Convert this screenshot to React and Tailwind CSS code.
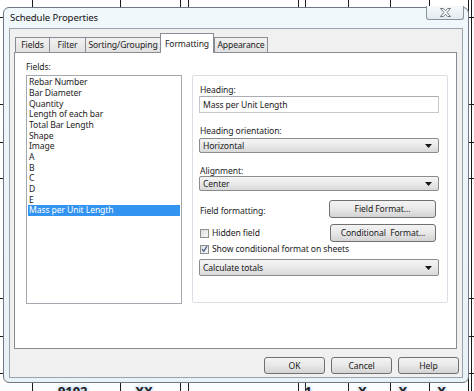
import React from "react";

function Combo({ label, className }) {
  return (
    <div
      className={`flex items-center justify-between rounded-[2px] border border-[#8b8c8e] bg-linear-to-b from-[#f5f5f5] via-[#e9e9e9] to-[#d9d9d9] pl-[3px] pr-[6px] ${className}`}
    >
      <span>{label}</span>
      <svg width="7" height="4" viewBox="0 0 7 4">
        <path d="M0 0H7L3.5 4Z" fill="#151515" />
      </svg>
    </div>
  );
}

function Btn({ children, className }) {
  return (
    <div
      className={`flex items-center justify-center rounded-[3px] border border-[#707070] bg-linear-to-b from-[#f3f3f3] via-[#e8e8e8] to-[#d3d3d3] ${className}`}
    >
      {children}
    </div>
  );
}

function Check({ checked }) {
  return (
    <div className="flex h-[9px] w-[9px] items-center justify-center border border-[#8e8f8f] bg-linear-to-br from-[#dcdcdc] to-[#f8f8f8]">
      {checked && (
        <svg width="8" height="8" viewBox="0 0 8 8">
          <path d="M1.2 4.2 L3.2 6.6 L6.8 0.8" stroke="#3d5486" strokeWidth="1.4" fill="none" />
        </svg>
      )}
    </div>
  );
}

function Background() {
  const vx = [32, 120, 180, 188, 298, 305, 348, 390, 429, 468];
  const hy = [17, 104, 142, 178, 298, 336, 373];
  return (
    <svg className="absolute inset-0" width="474" height="391">
      {vx.map((x) => (
        <line key={"v" + x} x1={x + 0.5} y1="0" x2={x + 0.5} y2="391" stroke="#1a1a1a" />
      ))}
      <line x1="471.5" y1="0" x2="471.5" y2="391" stroke="#1a1a1a" />
      {hy.map((y) => (
        <line key={"h" + y} x1="0" y1={y + 0.5} x2="474" y2={y + 0.5} stroke="#1a1a1a" />
      ))}
    </svg>
  );
}

export default function App() {
  const fields = [
    "Rebar Number",
    "Bar Diameter",
    "Quantity",
    "Length of each bar",
    "Total Bar Length",
    "Shape",
    "Image",
    "A",
    "B",
    "C",
    "D",
    "E",
    "Mass per Unit Length",
  ];
  const tabs = [
    { t: "Fields", w: "w-[34px]" },
    { t: "Filter", w: "w-[36px]" },
    { t: "Sorting/Grouping", w: "w-[75px]" },
    { t: "Formatting", w: "w-[54px]", active: true },
    { t: "Appearance", w: "w-[54px]" },
  ];
  return (
    <div className="relative h-[391px] w-[474px] overflow-hidden bg-white font-['Noto_Sans',sans-serif] text-[8.6px] leading-[10px] tracking-[-0.1px] text-[#1b1b1b]">
      <Background />
      {/* bottom strip text behind dialog */}
      <div className="absolute left-0 top-[383px] flex h-[8px] w-[474px] overflow-hidden text-[13px] leading-[16px] font-bold text-[#222] [text-shadow:0_0_4px_#7fb0e8]">
        <span className="ml-[58px]">9102</span>
        <span className="ml-[48px]">XX</span>
        <span className="ml-[152px]">1</span>
        <span className="ml-[46px]">X</span>
        <span className="ml-[32px]">X</span>
        <span className="ml-[30px]">X</span>
      </div>

      {/* Dialog window */}
      <div className="relative ml-[3px] mt-[7px] flex h-[376px] w-[466px] flex-col rounded-[6px] border border-[#6f7881] bg-linear-to-b from-[#f1f8fc] to-[#e8f1f6] px-[5px] pb-[4px]">
        {/* title bar */}
        <div className="relative flex h-[20px] items-center pl-[1px] text-[9.6px] text-[#111]">
          <span>Schedule Properties</span>
          <div className="absolute right-[-1px] top-[-2px] flex h-[14px] w-[38px] items-center justify-center rounded-b-[3px] border border-t-0 border-[#8a949c] bg-linear-to-b from-[#f6f9fb] to-[#e3ebf0]">
            <svg width="11" height="9" viewBox="0 0 11 9">
              <path
                d="M0.5 0.5 H3.3 L5.5 2.8 L7.7 0.5 H10.5 L7 4.5 L10.5 8.5 H7.7 L5.5 6.2 L3.3 8.5 H0.5 L4 4.5 Z"
                fill="#ffffff"
                stroke="#5f6a72"
                strokeWidth="0.9"
              />
            </svg>
          </div>
        </div>

        {/* client area */}
        <div className="flex flex-1 flex-col border border-[#9aa3ab] bg-[#f0f0f0] pt-[4px]">
          {/* tab strip */}
          <div className="ml-[5px] flex h-[20px] items-end">
            {tabs.map((tab) =>
              tab.active ? (
                <div
                  key={tab.t}
                  className={`relative z-10 flex h-[20px] items-center justify-center border border-b-0 border-[#898c95] bg-white pt-[1px] ${tab.w}`}
                >
                  {tab.t}
                </div>
              ) : (
                <div
                  key={tab.t}
                  className={`flex h-[16px] items-center justify-center border border-r-0 border-[#898c95] bg-linear-to-b from-[#f2f2f2] to-[#e1e1e1] last:border-r ${tab.w}`}
                >
                  {tab.t}
                </div>
              )
            )}
          </div>

          {/* panel */}
          <div className="-mt-px ml-[4px] mr-[5px] flex h-[297px] items-start border border-[#898c95] bg-white pl-[11px] pt-[8px]">
            <div className="flex w-[156px] flex-col">
              <div className="flex h-[12px] items-center">Fields:</div>
              <div className="mt-[2px] flex h-[229px] flex-col border border-[#a4a9b0] bg-white pt-[1px]">
                {fields.map((f, i) =>
                  i === fields.length - 1 ? (
                    <div
                      key={f}
                      className="mx-[1px] flex h-[10.67px] items-center bg-[#3393f0] pl-[1px] text-white"
                    >
                      {f}
                    </div>
                  ) : (
                    <div key={f} className="mx-[1px] flex h-[10.67px] items-center pl-[1px]">
                      {f}
                    </div>
                  )
                )}
              </div>
            </div>

            {/* group box */}
            <div className="ml-[10px] mt-[14px] flex h-[228px] w-[256px] flex-col rounded-[2px] border border-[#d9dfe4] pl-[6px]">
              <div className="ml-[1px] mt-[8px] flex h-[12px] items-center">Heading:</div>
              <div className="flex h-[17px] w-[240px] items-center border border-[#c5c9ce] border-t-[#abadb3] bg-white pl-[3px]">
                Mass per Unit Length
              </div>
              <div className="ml-[1px] mt-[12px] flex h-[12px] items-center">Heading orientation:</div>
              <Combo label="Horizontal" className="mt-[1px] h-[15px] w-[240px]" />
              <div className="ml-[1px] mt-[12px] flex h-[11px] items-center">Alignment:</div>
              <Combo label="Center" className="h-[15px] w-[240px]" />

              <div className="mt-[9px] flex h-[18px] w-[237px] items-start justify-between">
                <span className="ml-[1px] mt-[6px]">Field formatting:</span>
                <Btn className="h-[18px] w-[107px]">Field Format...</Btn>
              </div>
              <div className="mt-[6px] flex h-[18px] w-[237px] items-center justify-between">
                <div className="ml-[1px] flex items-center gap-[3px]">
                  <Check />
                  <span>Hidden field</span>
                </div>
                <Btn className="h-[18px] w-[106px]">Conditional&nbsp; Format...</Btn>
              </div>
              <div className="ml-[1px] mt-[1px] flex h-[12px] items-center gap-[3px]">
                <Check checked />
                <span>Show conditional format on sheets</span>
              </div>
              <Combo label="Calculate totals" className="mt-[4px] h-[17px] w-[240px]" />
            </div>
          </div>

          {/* buttons */}
          <div className="mr-[3px] mt-[8px] flex justify-end gap-[6px]">
            <Btn className="h-[17px] w-[61px]">OK</Btn>
            <Btn className="h-[17px] w-[61px]">Cancel</Btn>
            <Btn className="h-[17px] w-[61px]">Help</Btn>
          </div>
        </div>
      </div>
    </div>
  );
}
